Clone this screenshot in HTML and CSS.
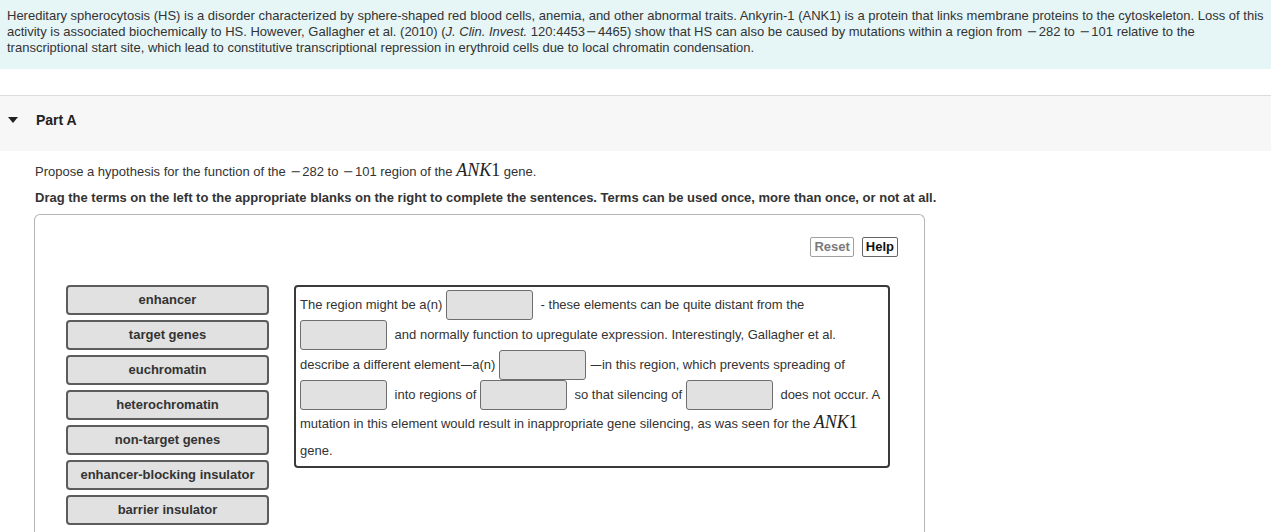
FILE: index.html
```html
<!DOCTYPE html>
<html>
<head>
<meta charset="utf-8">
<link rel="stylesheet" href="styles.css">
</head>
<body>
<div class="intro">Hereditary spherocytosis (HS) is a disorder characterized by sphere-shaped red blood cells, anemia, and other abnormal traits. Ankyrin-1 (ANK1) is a protein that links membrane proteins to the cytoskeleton. Loss of this activity is associated biochemically to HS. However, Gallagher et al. (2010) (<i>J. Clin. Invest.</i> 120:4453<span class="minus">−</span>4465) show that HS can also be caused by mutations within a region from <span class="minus">−</span>282 to <span class="minus">−</span>101 relative to the transcriptional start site, which lead to constitutive transcriptional repression in erythroid cells due to local chromatin condensation.</div>

<div class="part-header"><span class="caret"></span><span class="part-title">Part A</span></div>

<div class="part-body">
  <p class="prompt">Propose a hypothesis for the function of the <span class="minus">−</span>282 to <span class="minus">−</span>101 region of the <span class="math"><i>ANK</i>1</span> gene.</p>
  <p class="instr">Drag the terms on the left to the appropriate blanks on the right to complete the sentences. Terms can be used once, more than once, or not at all.</p>

  <div class="dnd">
    <div class="toolbar">
      <button class="btn btn-reset">Reset</button>
      <button class="btn btn-help">Help</button>
    </div>
    <div class="work">
      <div class="terms">
        <div class="term">enhancer</div>
        <div class="term">target genes</div>
        <div class="term">euchromatin</div>
        <div class="term">heterochromatin</div>
        <div class="term">non-target genes</div>
        <div class="term">enhancer-blocking insulator</div>
        <div class="term">barrier insulator</div>
      </div>
      <div class="sentences">
        <div class="line">The region might be a(n) <span class="drop"></span> - these elements can be quite distant from the</div>
        <div class="line"><span class="drop"></span> and normally function to upregulate expression. Interestingly, Gallagher et al.</div>
        <div class="line">describe a different element<span class="dash">—</span>a(n) <span class="drop"></span><span class="dash">—</span>in this region, which prevents spreading of</div>
        <div class="line"><span class="drop"></span> into regions of <span class="drop"></span> so that silencing of <span class="drop"></span> does not occur. A</div>
        <div class="line text">mutation in this element would result in inappropriate gene silencing, as was seen for the <span class="math"><i>ANK</i>1</span></div>
        <div class="line text">gene.</div>
      </div>
    </div>
  </div>
</div>
</body>
</html>
```

FILE: styles.css
```css
html, body {
  margin: 0;
  padding: 0;
  background: #fff;
}
body {
  font-family: "Liberation Sans", Arial, sans-serif;
  font-size: 13px;
  color: #333;
}
.intro {
  background: #e6f5f6;
  padding: 8px 2px 13px 7px;
  line-height: 16px;
}
.minus {
  font-family: "DejaVu Sans", sans-serif;
  font-size: 13px;
  padding: 0 1px;
}
.dash {
  font-family: "DejaVu Sans", sans-serif;
  font-size: 12px;
}
.math {
  font-family: "Liberation Serif", "Times New Roman", serif;
  font-size: 18px;
  line-height: 16px;
  color: #222;
}
.part-header {
  margin-top: 26px;
  border-top: 1px solid #dcdcdc;
  background: #f7f7f7;
  height: 39px;
  padding-top: 16px;
  display: flex;
  align-items: flex-start;
  line-height: 16px;
}
.caret {
  width: 0;
  height: 0;
  border-left: 5px solid transparent;
  border-right: 5px solid transparent;
  border-top: 6px solid #222;
  margin-left: 8px;
  margin-right: 18px;
  margin-top: 5px;
}
.part-title {
  font-weight: bold;
  font-size: 14px;
  color: #222;
}
.part-body {
  padding-left: 34px;
}
.prompt {
  margin: 11px 0 0 1px;
  line-height: 16px;
}
.instr {
  margin: 10px 0 0 1px;
  line-height: 16px;
  font-weight: bold;
}
.dnd {
  margin-top: 8px;
  width: 889px;
  height: 330px;
  border: 1px solid #b5b5b5;
  border-bottom: none;
  border-radius: 6px 6px 0 0;
}
.toolbar {
  display: flex;
  justify-content: flex-end;
  gap: 8px;
  padding: 22px 26px 0 0;
}
.btn {
  font-family: "Liberation Sans", Arial, sans-serif;
  font-size: 13px;
  font-weight: bold;
  height: 20px;
  padding: 0 3px;
  background: #fff;
  border: 1px solid #8a8a8a;
  border-radius: 2px;
  line-height: 18px;
}
.btn-reset {
  color: #7a7a7a;
  border-color: #a0a0a0;
}
.btn-help {
  color: #111;
  border-color: #666;
}
.work {
  display: flex;
  align-items: flex-start;
  gap: 25px;
  margin-top: 28px;
  padding-left: 31px;
}
.terms {
  display: flex;
  flex-direction: column;
  gap: 5px;
  width: 203px;
}
.term {
  height: 26px;
  box-sizing: content-box;
  border: 2px solid #5c5c5c;
  border-radius: 4px;
  background: #e1e1e1;
  font-weight: bold;
  font-size: 13px;
  color: #333;
  text-align: center;
  line-height: 26px;
}
.sentences {
  width: 582px;
  border: 2px solid #3a3a3a;
  border-radius: 4px;
  padding: 3px 6px 2px 4px;
}
.line {
  height: 30px;
  line-height: 30px;
  white-space: nowrap;
}
.line.text {
  height: 27px;
  line-height: 27px;
}
.drop {
  display: inline-block;
  vertical-align: middle;
  width: 85px;
  height: 28px;
  border: 1px solid #6e6e6e;
  border-radius: 3px;
  background: #e1e1e1;
  margin: -2px 4px 0 0;
}
```
